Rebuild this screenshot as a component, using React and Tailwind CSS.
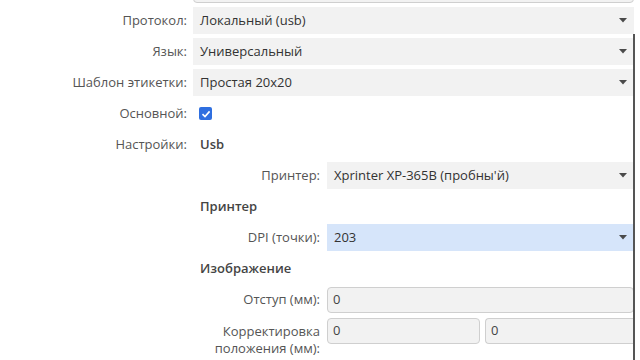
import React from "react";

function Caret() {
    return (
        <svg width="8" height="5" viewBox="0 0 8 5" className="shrink-0">
            <path d="M0 0 L8 0 L4 4.5 Z" fill="#4a4a4a" />
        </svg>
    );
}

function Select({ value, active }) {
    return (
        <div
            className={`flex h-[27px] flex-1 items-center justify-between pl-[7px] pr-[7px] text-[#333] ${
                active ? "bg-[#d6e5fa]" : "bg-[#f2f2f2]"
            }`}
        >
            <span>{value}</span>
            <Caret />
        </div>
    );
}

function Input({ value, className = "" }) {
    return (
        <div
            className={`flex h-[26px] items-center rounded-[4px] border border-[#cfcfcf] bg-[#f2f2f2] pl-[5px] text-[#444] ${className}`}
        >
            {value}
        </div>
    );
}

function Row({ label, children }) {
    return (
        <div className="flex min-h-[27px] items-center gap-[6px]">
            <div className="w-[187px] shrink-0 text-right text-[#555]">{label}</div>
            <div className="flex flex-1 items-center">{children}</div>
        </div>
    );
}

function SubRow({ label, children, top }) {
    return (
        <div className="flex min-h-[27px] items-center gap-[6px]">
            <div className="w-[187px] shrink-0" />
            <div className={`flex flex-1 gap-[7px] ${top ? "items-start" : "items-center"}`}>
                <div
                    className={`w-[127px] shrink-0 text-right leading-[17px] text-[#555] ${
                        top ? "pt-[5px]" : ""
                    }`}
                >
                    {label}
                </div>
                <div className="flex flex-1 items-center gap-[5px]">{children}</div>
            </div>
        </div>
    );
}

function Heading({ children }) {
    return (
        <div className="flex h-[27px] items-center gap-[6px]">
            <div className="w-[187px] shrink-0" />
            <div className="pl-[7px] font-semibold text-[#444]">{children}</div>
        </div>
    );
}

export default function App() {
    return (
        <div
            className="relative h-[360px] w-[640px] overflow-hidden bg-white text-[13px]"
            style={{ fontFamily: '"Open Sans", "Liberation Sans", sans-serif' }}
        >
            <div className="flex w-[634px] flex-col gap-[4px]">
                <div className="-mt-[25px] flex gap-[6px]">
                    <div className="w-[187px] shrink-0" />
                    <div className="h-[28px] flex-1 rounded-[4px] border border-[#cfcfcf] bg-[#f2f2f2]" />
                </div>
                <Row label="Протокол:">
                    <Select value="Локальный (usb)" />
                </Row>
                <Row label="Язык:">
                    <Select value="Универсальный" />
                </Row>
                <Row label="Шаблон этикетки:">
                    <Select value="Простая 20x20" />
                </Row>
                <Row label="Основной:">
                    <div className="ml-[6px] flex h-[13px] w-[13px] items-center justify-center rounded-[2px] bg-[#2f6fe0]">
                        <svg width="10" height="10" viewBox="0 0 10 10">
                            <path d="M1.5 5.2 L4 7.6 L8.6 2.4" fill="none" stroke="white" strokeWidth="1.6" />
                        </svg>
                    </div>
                </Row>
                <Row label="Настройки:">
                    <span className="pl-[7px] font-semibold text-[#444]">Usb</span>
                </Row>
                <SubRow label="Принтер:">
                    <Select value="Xprinter XP-365B (пробны'й)" />
                </SubRow>
                <Heading>Принтер</Heading>
                <SubRow label="DPI (точки):">
                    <Select value="203" active />
                </SubRow>
                <Heading>Изображение</Heading>
                <SubRow label="Отступ (мм):">
                    <Input value="0" className="flex-1" />
                </SubRow>
                <div className="mt-[1px]">
                    <SubRow
                        top
                        label={
                            <>
                                Корректировка
                                <br />
                                положения (мм):
                            </>
                        }
                    >
                        <Input value="0" className="w-[153px] shrink-0" />
                        <Input value="0" className="flex-1 rounded-r-none border-r-0" />
                    </SubRow>
                </div>
            </div>
            <div className="absolute bottom-0 left-[633px] top-[34px] w-[2px] bg-[#555]" />
        </div>
    );
}
